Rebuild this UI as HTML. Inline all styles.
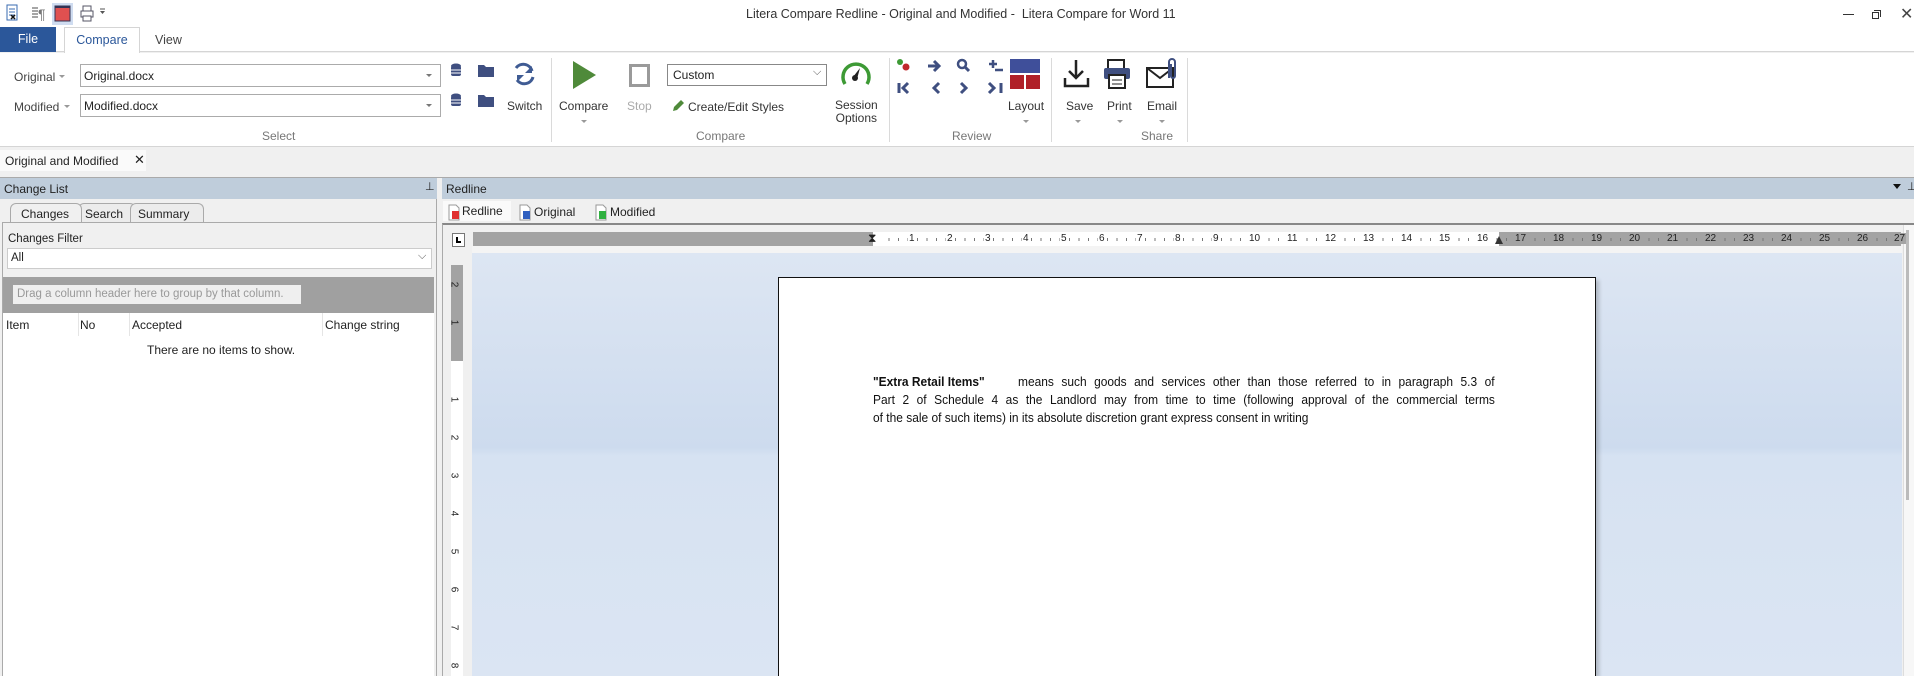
<!DOCTYPE html>
<html><head><meta charset="utf-8"><style>
*{box-sizing:border-box;margin:0;padding:0}
html{width:1914px;height:676px;overflow:hidden}
body{width:1914px;height:676px;overflow:hidden;background:#f0f0f0;font-family:"Liberation Sans",sans-serif;font-size:12px;color:#222;position:relative}
.a{position:absolute;white-space:nowrap}
.sep{position:absolute;width:1px;background:#dadada}
.combo{position:absolute;background:#fff;border:1px solid #ababab}
.dd{position:absolute;width:0;height:0;border-left:3px solid transparent;border-right:3px solid transparent;border-top:3px solid #777}
.rn{position:absolute;font-size:10px;top:1px;color:#222;background:inherit;padding:0 1px}
.vn{position:absolute;font-size:10px;left:2px;transform:rotate(90deg);color:#222}
.doc{font-family:"Liberation Sans",sans-serif;font-size:13px;color:#111;transform-origin:0 0;transform:scaleX(0.92)}
</style></head><body>
<div class="a" style="left:0;top:0;width:1914px;height:27px;background:#fff"></div>
<svg class="a" style="top:3px;left:4px" width="108" height="22">
<rect x="3" y="2" width="10" height="15" fill="#fff" stroke="#3a6bb0"/><path d="M5 6h6M5 9h6M5 12h6" stroke="#3a6bb0"/><path d="M7 12l4 4M11 12l-4 4" stroke="#111" stroke-width="1.5"/>
<path d="M28 5h6M28 8h6M28 11h6M28 14h6" stroke="#888" stroke-width="1.5"/><text x="34" y="16" font-size="14" fill="#777" font-family="Liberation Sans">¶</text>
<rect x="48" y="0" width="21" height="22" fill="#cfdcf0"/><rect x="51" y="3" width="15" height="15" fill="#e05050" stroke="#335"/><rect x="51" y="3" width="15" height="2" fill="#335"/>
<rect x="77" y="8" width="12" height="6" fill="#fff" stroke="#556"/><rect x="79" y="3" width="8" height="5" fill="#fff" stroke="#556"/><rect x="79" y="13" width="8" height="5" fill="#fff" stroke="#556"/>
<path d="M96 8h5l-2.5 3z" fill="#555"/><path d="M96 6h5" stroke="#555"/>
</svg>
<div class="a" style="left:746px;top:7px;font-size:12.5px;color:#333">Litera Compare Redline - Original and Modified -&nbsp; Litera Compare for Word 11</div>
<div class="a" style="left:1843px;top:14px;width:11px;height:1px;background:#333"></div>
<div class="a" style="left:1872px;top:12px;width:7px;height:7px;border:1px solid #333;background:#fff"></div>
<div class="a" style="left:1874px;top:10px;width:7px;height:7px;border-top:1px solid #333;border-right:1px solid #333"></div>
<div class="a" style="left:1900px;top:4px;font-size:16px;color:#444">✕</div>
<div class="a" style="left:0;top:27px;width:1914px;height:25px;background:#fff;border-bottom:1px solid #d5d5d5"></div>
<div class="a" style="left:0;top:27px;width:56px;height:25px;background:#2b579a;color:#fff;text-align:center;line-height:25px;font-size:12.5px">File</div>
<div class="a" style="left:64px;top:27px;width:76px;height:26px;background:#fff;border:1px solid #d5d5d5;border-bottom:none;color:#2b579a;text-align:center;line-height:24px;font-size:12.5px">Compare</div>
<div class="a" style="left:155px;top:33px;font-size:12.5px;color:#444">View</div>
<div class="a" style="left:0;top:53px;width:1914px;height:94px;background:#fff;border-bottom:1px solid #d5d5d5"></div>
<div class="a" style="left:14px;top:70px;color:#444">Original</div><div class="dd" style="left:59px;top:75px;border-top-color:#999"></div>
<div class="a" style="left:14px;top:100px;color:#444">Modified</div><div class="dd" style="left:64px;top:105px;border-top-color:#999"></div>
<div class="combo" style="left:80px;top:64px;width:361px;height:23px"><span class="a" style="left:3px;top:4px">Original.docx</span><div class="dd" style="left:345px;top:9px"></div></div>
<div class="combo" style="left:80px;top:94px;width:361px;height:23px"><span class="a" style="left:3px;top:4px">Modified.docx</span><div class="dd" style="left:345px;top:9px"></div></div>
<svg class="a" style="left:450px;top:62px" width="100" height="55">
<g fill="#3f4f80"><ellipse cx="6" cy="4" rx="5" ry="2.5"/><rect x="1" y="4" width="10" height="10" rx="2"/></g><path d="M1 8h10M1 11h10" stroke="#fff"/>
<g fill="#3f4f80" transform="translate(0,30)"><ellipse cx="6" cy="4" rx="5" ry="2.5"/><rect x="1" y="4" width="10" height="10" rx="2"/></g><path d="M1 38h10M1 41h10" stroke="#fff"/>
<path d="M28 3h6l2 2h8v10h-16z" fill="#3f4f80"/><path d="M28 33h6l2 2h8v10h-16z" fill="#3f4f80"/>
<path d="M66 6a9 9 0 0 1 16 3M83 15a9 9 0 0 1-16 3" fill="none" stroke="#3f5b93" stroke-width="3"/><path d="M82 4v7h-7z M67 20v-7h7z" fill="#3f5b93"/>
</svg>
<div class="a" style="left:507px;top:99px;color:#333">Switch</div>
<div class="a" style="left:262px;top:129px;color:#777">Select</div>
<div class="sep" style="left:551px;top:58px;height:84px"></div>
<svg class="a" style="left:570px;top:60px" width="30" height="30"><path d="M3 1l23 14-23 14z" fill="#4f8a3a"/></svg>
<div class="a" style="left:559px;top:99px;color:#333">Compare</div><div class="dd" style="left:581px;top:120px;border-top-color:#999"></div>
<div class="a" style="left:629px;top:64px;width:21px;height:23px;border:3px solid #9a9a9a"></div>
<div class="a" style="left:627px;top:99px;color:#aaa">Stop</div>
<div class="combo" style="left:667px;top:64px;width:160px;height:22px;border-color:#888"><span class="a" style="left:5px;top:3px">Custom</span><span class="a" style="left:145px;top:1px;font-size:11px;color:#555">⌵</span></div>
<svg class="a" style="left:671px;top:99px" width="14" height="14"><path d="M2 12l1-4 7-7 3 3-7 7z" fill="#4f8a3a"/></svg>
<div class="a" style="left:688px;top:100px;color:#333">Create/Edit Styles</div>
<div class="a" style="left:696px;top:129px;color:#777">Compare</div>
<svg class="a" style="left:840px;top:60px" width="32" height="28"><path d="M5 24A13 13 0 1 1 27 24" fill="none" stroke="#3d9a35" stroke-width="3.5"/><path d="M20 8l-3 11-4-2z" fill="#222"/><circle cx="15" cy="18" r="3" fill="#222"/></svg>
<div class="a" style="left:835px;top:99px;color:#333;text-align:center;line-height:13px">Session<br>Options</div>
<div class="sep" style="left:889px;top:58px;height:84px"></div>
<svg class="a" style="left:896px;top:58px" width="150" height="40">
<circle cx="4" cy="4" r="3" fill="#3d9a35"/><circle cx="10" cy="9" r="3.5" fill="#c0282c"/>
<path d="M32 8h10M38 3l5 5-5 5" fill="none" stroke="#3f4f80" stroke-width="3"/>
<circle cx="66" cy="6" r="4" fill="none" stroke="#3f4f80" stroke-width="2.5"/><path d="M69 9l4 4" stroke="#3f4f80" stroke-width="3"/>
<path d="M93 6h8M97 2v8M99 12h8" stroke="#3f4f80" stroke-width="2.5"/>
<path d="M3 25v10M12 25l-5 5 5 5" fill="none" stroke="#3f4f80" stroke-width="3"/>
<path d="M43 25l-5 5 5 5" fill="none" stroke="#3f4f80" stroke-width="3"/>
<path d="M65 25l5 5-5 5" fill="none" stroke="#3f4f80" stroke-width="3"/>
<path d="M93 25l5 5-5 5M105 25v10" fill="none" stroke="#3f4f80" stroke-width="3"/>
<rect x="114" y="1" width="30" height="14" fill="#3f4f9a"/><rect x="114" y="17" width="14" height="14" fill="#b02028"/><rect x="130" y="17" width="14" height="14" fill="#b02028"/>
</svg>
<div class="a" style="left:1008px;top:99px;color:#333">Layout</div><div class="dd" style="left:1023px;top:120px;border-top-color:#999"></div>
<div class="a" style="left:952px;top:129px;color:#777">Review</div>
<div class="sep" style="left:1051px;top:58px;height:84px"></div>
<svg class="a" style="left:1062px;top:58px" width="120" height="34">
<path d="M14 2v18M7 13l7 7 7-7" fill="none" stroke="#222" stroke-width="2.5"/><path d="M3 20v8h23v-8" fill="none" stroke="#222" stroke-width="2.5"/>
<rect x="46" y="2" width="16" height="9" fill="#fff" stroke="#222" stroke-width="2"/><rect x="42" y="10" width="26" height="11" rx="2" fill="#3f4f80"/><rect x="47" y="17" width="16" height="13" fill="#fff" stroke="#222" stroke-width="2"/><path d="M50 22h10M50 26h10" stroke="#222"/>
<rect x="85" y="10" width="26" height="19" fill="#fff" stroke="#222" stroke-width="2"/><path d="M85 10l13 10 13-10" fill="none" stroke="#222" stroke-width="2"/><path d="M107 20V4a3 3 0 0 1 6 0v14a2 2 0 0 1-4 0V6" fill="none" stroke="#3f4f80" stroke-width="2"/>
</svg>
<div class="a" style="left:1066px;top:99px;color:#333">Save</div><div class="dd" style="left:1075px;top:120px;border-top-color:#999"></div>
<div class="a" style="left:1107px;top:99px;color:#333">Print</div><div class="dd" style="left:1117px;top:120px;border-top-color:#999"></div>
<div class="a" style="left:1147px;top:99px;color:#333">Email</div><div class="dd" style="left:1159px;top:120px;border-top-color:#999"></div>
<div class="a" style="left:1141px;top:129px;color:#777">Share</div>
<div class="sep" style="left:1187px;top:58px;height:84px"></div>
<div class="a" style="left:0;top:150px;width:146px;height:21px;background:#fafafa"></div>
<div class="a" style="left:5px;top:154px;color:#222">Original and Modified</div>
<div class="a" style="left:134px;top:152px;font-size:13px;color:#222">✕</div>
<div class="a" style="left:0;top:177px;width:1914px;height:1px;background:#aaa"></div>
<div class="a" style="left:0;top:178px;width:437px;height:498px;background:#f0f0f0;border-right:1px solid #aaa"></div>
<div class="a" style="left:0;top:178px;width:437px;height:21px;background:#bfcddb"></div>
<div class="a" style="left:4px;top:182px;color:#222">Change List</div>
<div class="a" style="left:425px;top:180px;font-size:11px">⊥</div>
<div class="a" style="left:78px;top:203px;width:58px;height:20px;border:1px solid #aaa;border-bottom:none;border-radius:6px 6px 0 0;background:#ececec"></div>
<div class="a" style="left:130px;top:203px;width:74px;height:20px;border:1px solid #aaa;border-bottom:none;border-radius:6px 6px 0 0;background:#ececec"></div>
<div class="a" style="left:10px;top:203px;width:72px;height:20px;border:1px solid #aaa;border-bottom:none;border-radius:6px 6px 0 0;background:#f0f0f0"></div>
<div class="a" style="left:21px;top:207px">Changes</div><div class="a" style="left:85px;top:207px">Search</div><div class="a" style="left:138px;top:207px">Summary</div>
<div class="a" style="left:2px;top:222px;width:435px;height:454px;border:1px solid #aaa;border-bottom:none"></div>
<div class="a" style="left:8px;top:233px;font-size:11.5px">Changes Filter</div>
<div class="combo" style="left:7px;top:248px;width:425px;height:21px;border-color:#ccc"><span class="a" style="left:3px;top:3px;font-size:11.5px">All</span><span class="a" style="left:410px;top:1px;font-size:11px;color:#555">⌵</span></div>
<div class="a" style="left:3px;top:277px;width:431px;height:36px;background:#a0a0a0"></div>
<div class="a" style="left:13px;top:285px;width:288px;height:19px;background:#efefef;color:#999;font-size:11.5px;padding:3px 0 0 4px">Drag a column header here to group by that column.</div>
<div class="a" style="left:3px;top:313px;width:431px;height:363px;background:#fff"></div>
<div class="a" style="left:6px;top:318px">Item</div><div class="a" style="left:80px;top:318px">No</div><div class="a" style="left:132px;top:318px">Accepted</div><div class="a" style="left:325px;top:318px">Change string</div>
<div class="sep" style="left:78px;top:313px;height:23px;background:#e5e5e5"></div><div class="sep" style="left:129px;top:313px;height:23px;background:#e5e5e5"></div><div class="sep" style="left:322px;top:313px;height:23px;background:#e5e5e5"></div>
<div class="a" style="left:147px;top:343px">There are no items to show.</div>
<div class="a" style="left:442px;top:178px;width:1472px;height:21px;background:#bfcddb"></div>
<div class="a" style="left:446px;top:182px">Redline</div>
<div class="a" style="left:1893px;top:184px;border-left:4px solid transparent;border-right:4px solid transparent;border-top:5px solid #111"></div>
<div class="a" style="left:1907px;top:180px;font-size:11px">⊥</div>
<div class="a" style="left:443px;top:201px;width:68px;height:20px;background:#fafafa"></div>
<svg class="a" style="left:448px;top:203px" width="220" height="18">
<path d="M1 2h7l3 3v12H1z" fill="#fff" stroke="#999"/><rect x="4" y="8" width="7" height="8" fill="#e03030"/>
<path d="M72 2h7l3 3v12H72z" fill="#fff" stroke="#999"/><rect x="75" y="8" width="7" height="8" fill="#3060c0"/>
<path d="M148 2h7l3 3v12h-10z" fill="#fff" stroke="#999"/><rect x="151" y="8" width="7" height="8" fill="#30b040"/>
</svg>
<div class="a" style="left:462px;top:204px">Redline</div><div class="a" style="left:534px;top:205px">Original</div><div class="a" style="left:610px;top:205px">Modified</div>
<div class="a" style="left:442px;top:223px;width:1472px;height:453px;background:#f0f0f0;border-top:2px solid #888;border-left:1px solid #aaa"></div>
<div class="a" style="left:452px;top:233px;width:13px;height:14px;border:1px solid #777;background:#fff"></div>
<div class="a" style="left:456px;top:237px;width:5px;height:6px;border-left:2px solid #000;border-bottom:2px solid #000"></div>
<div class="a" style="left:473px;top:232px;width:1428px;height:14px;background:#a3a3a3"></div>
<div class="a" style="left:873px;top:232px;width:626px;height:14px;background:#fff"></div>
<div class="a" style="left:472px;top:246px;width:1430px;height:7px;background:#f4f4f4"></div>
<div class="a" style="left:472px;top:253px;width:1430px;height:423px;background:linear-gradient(#dde6f3,#cddbee 46%,#d6e2f2 48%,#dbe5f3)"></div>
<div class="a" style="left:1903px;top:225px;width:11px;height:451px;background:#f7f7f7;border-left:1px solid #ddd"></div>
<div class="a" style="left:1906px;top:230px;width:3px;height:270px;background:#bbb"></div>
<div class="a" style="left:880px;top:238px;width:1020px;height:3px;background:repeating-linear-gradient(90deg,transparent 0 8.5px,#777 8.5px 9.5px)"></div>
<div class="a" style="left:868px;top:232px;font-size:12px;line-height:13px">⧗</div>
<div class="a" style="left:1495px;top:236px;border-left:4px solid transparent;border-right:4px solid transparent;border-bottom:8px solid #333"></div>
<div style="position:absolute;left:0;top:232px">
<span class="rn" style="left:908px;background:#fff">1</span><span class="rn" style="left:946px;background:#fff">2</span><span class="rn" style="left:984px;background:#fff">3</span><span class="rn" style="left:1022px;background:#fff">4</span><span class="rn" style="left:1060px;background:#fff">5</span><span class="rn" style="left:1098px;background:#fff">6</span><span class="rn" style="left:1136px;background:#fff">7</span><span class="rn" style="left:1174px;background:#fff">8</span><span class="rn" style="left:1212px;background:#fff">9</span><span class="rn" style="left:1248px;background:#fff">10</span><span class="rn" style="left:1286px;background:#fff">11</span><span class="rn" style="left:1324px;background:#fff">12</span><span class="rn" style="left:1362px;background:#fff">13</span><span class="rn" style="left:1400px;background:#fff">14</span><span class="rn" style="left:1438px;background:#fff">15</span><span class="rn" style="left:1476px;background:#fff">16</span><span class="rn" style="left:1514px;background:#a3a3a3">17</span><span class="rn" style="left:1552px;background:#a3a3a3">18</span><span class="rn" style="left:1590px;background:#a3a3a3">19</span><span class="rn" style="left:1628px;background:#a3a3a3">20</span><span class="rn" style="left:1666px;background:#a3a3a3">21</span><span class="rn" style="left:1704px;background:#a3a3a3">22</span><span class="rn" style="left:1742px;background:#a3a3a3">23</span><span class="rn" style="left:1780px;background:#a3a3a3">24</span><span class="rn" style="left:1818px;background:#a3a3a3">25</span><span class="rn" style="left:1856px;background:#a3a3a3">26</span><span class="rn" style="left:1893px;background:#a3a3a3">27</span>
</div>
<div class="a" style="left:451px;top:265px;width:12px;height:411px;background:#fff"></div>
<div class="a" style="left:451px;top:265px;width:12px;height:96px;background:#a3a3a3"></div>
<div style="position:absolute;left:449px;top:0">
<span class="vn" style="top:279px">2</span><span class="vn" style="top:317px">1</span><span class="vn" style="top:394px">1</span><span class="vn" style="top:432px">2</span><span class="vn" style="top:470px">3</span><span class="vn" style="top:508px">4</span><span class="vn" style="top:546px">5</span><span class="vn" style="top:584px">6</span><span class="vn" style="top:622px">7</span><span class="vn" style="top:660px">8</span>
</div>
<div class="a" style="left:778px;top:277px;width:818px;height:399px;background:#fff;border:1px solid #111;border-bottom:none;box-shadow:3px 3px 4px rgba(0,0,0,.2)"></div>
<div class="a doc" style="left:873px;top:374px"><b>"Extra Retail Items"</b></div>
<div class="a doc" style="left:1018px;top:374px;width:518px;text-align:justify;text-align-last:justify">means such goods and services other than those referred to in paragraph 5.3 of</div>
<div class="a doc" style="left:873px;top:392px;width:676px;text-align:justify;text-align-last:justify">Part 2 of Schedule 4 as the Landlord may from time to time (following approval of the commercial terms</div>
<div class="a doc" style="left:873px;top:410px">of the sale of such items) in its absolute discretion grant express consent in writing</div>
</body></html>
